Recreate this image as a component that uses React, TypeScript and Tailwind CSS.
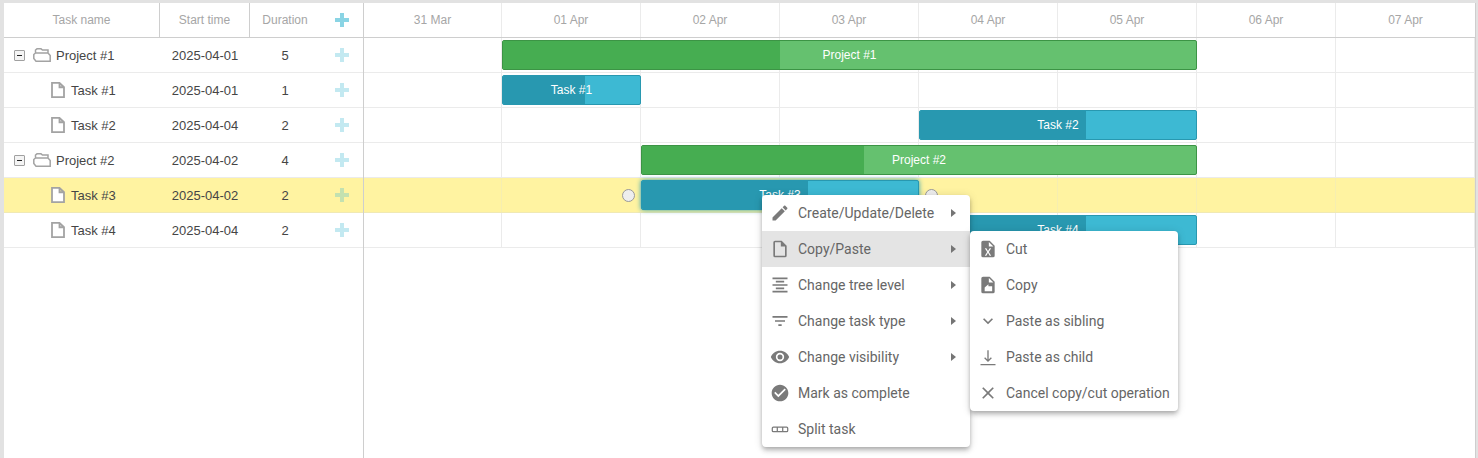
import React from "react";

const ICONS = {
  pencil: "M20.71,7.04C21.1,6.65 21.1,6 20.71,5.63L18.37,3.29C18,2.9 17.35,2.9 16.96,3.29L15.12,5.12L18.87,8.87M3,17.25V21H6.75L17.81,9.93L14.06,6.18L3,17.25Z",
  file: "M14,2H6A2,2 0 0,0 4,4V20A2,2 0 0,0 6,22H18A2,2 0 0,0 20,20V8L14,2M18,20H6V4H13V9H18V20Z",
  align: "M3,3H21V5H3V3M7,7H17V9H7V7M3,11H21V13H3V11M7,15H17V17H7V15M3,19H21V21H3V19Z",
  filter: "M6,13H18V11H6M3,6V8H21V6M10,18H14V16H10V18Z",
  eye: "M12,9A3,3 0 0,0 9,12A3,3 0 0,0 12,15A3,3 0 0,0 15,12A3,3 0 0,0 12,9M12,17A5,5 0 0,1 7,12A5,5 0 0,1 12,7A5,5 0 0,1 17,12A5,5 0 0,1 12,17M12,4.5C7,4.5 2.73,7.61 1,12C2.73,16.39 7,19.5 12,19.5C17,19.5 21.27,16.39 23,12C21.27,7.61 17,4.5 12,4.5Z",
  check: "M12 2C6.5 2 2 6.5 2 12S6.5 22 12 22 22 17.5 22 12 17.5 2 12 2M10 17L5 12L6.41 10.59L10 14.17L17.59 6.58L19 8L10 17Z",
  split: "M4,9H20A2,2 0 0,1 22,11V14A2,2 0 0,1 20,16H4A2,2 0 0,1 2,14V11A2,2 0 0,1 4,9M4,10.5A.5,.5 0 0,0 3.5,11V14A.5,.5 0 0,0 4,14.5H8V10.5H4M9.5,10.5V14.5H14.5V10.5H9.5M16,10.5V14.5H20A.5,.5 0 0,0 20.5,14V11A.5,.5 0 0,0 20,10.5H16Z",
  cut: "M14,2H6A2,2 0 0,0 4,4V20A2,2 0 0,0 6,22H18A2,2 0 0,0 20,20V8L14,2M15.8,20H14L12,16.6L10,20H8.2L11.1,15.5L8.2,11H10L12,14.4L14,11H15.8L12.9,15.5L15.8,20M13,9V3.5L18.5,9H13Z",
  copy: "M14,2H6A2,2 0 0,0 4,4V20A2,2 0 0,0 6,22H18A2,2 0 0,0 20,20V8L14,2M13,9V3.5L18.5,9H13M12.5,11V13.5H17V19.5H8V15Z",
  chevron: "M7.41,8.58L12,13.17L16.59,8.58L18,10L12,16L6,10L7.41,8.58Z",
  child: "M11.2,4H12.8V15L15.5,12.3L16.6,13.4L12,18L7.4,13.4L8.5,12.3L11.2,15V4M3,20.5H21V22H3V20.5Z",
  close: "M19,6.41L17.59,5L12,10.59L6.41,5L5,6.41L10.59,12L5,17.59L6.41,19L12,13.41L17.59,19L19,17.59L13.41,12L19,6.41Z",
};

type IconName = keyof typeof ICONS;

const MenuIcon = ({ name }: { name: IconName }) => (
  <svg viewBox="0 0 24 24" className="w-5 h-5 shrink-0 fill-[#7a7a7a]">
    <path fillRule="evenodd" d={ICONS[name]} />
  </svg>
);

const MenuItem = ({ icon, label, arrow, active }: { icon: IconName; label: string; arrow?: boolean; active?: boolean }) => (
  <div className={`flex items-center h-9 pl-2 pr-[14px] gap-2 whitespace-nowrap ${active ? "bg-[#e4e4e4]" : ""}`}>
    <MenuIcon name={icon} />
    <span className="grow">{label}</span>
    {arrow && <span className="w-0 h-0 border-y-[4px] border-y-transparent border-l-[5px] border-l-[#757575]" />}
  </div>
);

const Plus = ({ strong }: { strong?: boolean }) => (
  <svg viewBox="0 0 14 14" className={`w-3.5 h-3.5 ${strong ? "fill-[#8ad4e4]" : "fill-[#3db9d3] opacity-30"}`}>
    <path d="M5,0H9V5H14V9H9V14H5V9H0V5H5Z" />
  </svg>
);

const FolderIcon = () => (
  <svg viewBox="0 0 18 14" className="w-[18px] h-[14px] fill-none stroke-[#a3a3a3]" strokeWidth="1.5">
    <path d="M2.5,5V2L4,.8H8L9.5,2H15V5M.8,6.5L2.5,5H15L17.2,7.5V13.2H3L.8,10.5Z" />
  </svg>
);

const FileIcon = () => (
  <svg viewBox="0 0 14 16" className="w-[14px] h-[16px] fill-white stroke-[#a3a3a3]">
    <path d="M1,.9H8.5L13,5.25V15.1H1ZM8.5,.9V5.25H13" strokeWidth="1.8" />
  </svg>
);

const rows = [
  { name: "Project #1", start: "2025-04-01", dur: 5, project: true },
  { name: "Task #1", start: "2025-04-01", dur: 1 },
  { name: "Task #2", start: "2025-04-04", dur: 2 },
  { name: "Project #2", start: "2025-04-02", dur: 4, project: true },
  { name: "Task #3", start: "2025-04-02", dur: 2, selected: true },
  { name: "Task #4", start: "2025-04-04", dur: 2 },
];

const days = ["31 Mar", "01 Apr", "02 Apr", "03 Apr", "04 Apr", "05 Apr", "06 Apr", "07 Apr"];

const bars = [
  { text: "Project #1", cls: "col-start-2 col-span-5", progress: "w-[40%]", green: true },
  { text: "Task #1", cls: "col-start-2 col-span-1", progress: "w-[60%]" },
  { text: "Task #2", cls: "col-start-5 col-span-2", progress: "w-[60%]" },
  { text: "Project #2", cls: "col-start-3 col-span-4", progress: "w-[40%]", green: true },
  { text: "Task #3", cls: "col-start-3 col-span-2", progress: "w-[60%]", selected: true },
  { text: "Task #4", cls: "col-start-5 col-span-2", progress: "w-[60%]" },
];

const mainMenu: { icon: IconName; label: string; arrow?: boolean; active?: boolean }[] = [
  { icon: "pencil", label: "Create/Update/Delete", arrow: true },
  { icon: "file", label: "Copy/Paste", arrow: true, active: true },
  { icon: "align", label: "Change tree level", arrow: true },
  { icon: "filter", label: "Change task type", arrow: true },
  { icon: "eye", label: "Change visibility", arrow: true },
  { icon: "check", label: "Mark as complete" },
  { icon: "split", label: "Split task" },
];

const subMenu: { icon: IconName; label: string }[] = [
  { icon: "cut", label: "Cut" },
  { icon: "copy", label: "Copy" },
  { icon: "chevron", label: "Paste as sibling" },
  { icon: "child", label: "Paste as child" },
  { icon: "close", label: "Cancel copy/cut operation" },
];

const COLS = "grid-cols-[138px_repeat(7,139px)]";

export default function App() {
  return (
    <div className="relative h-[458px] w-[1478px] overflow-hidden bg-[#e2e2e2] pt-[3px] pl-[4px] pr-[2px] font-['Liberation_Sans',Arial,sans-serif] text-[13px] text-[#454545]">
      <div className="flex h-full bg-white border-r border-[#cecece]">
        {/* grid */}
        <div className="w-[360px] shrink-0 border-r border-[#cecece]">
          <div className="flex h-[34px] box-content border-b border-[#cecece] text-xs text-[#a6a6a6]">
            <div className="w-[156px] flex items-center justify-center border-r border-[#cecece]">Task name</div>
            <div className="w-[90px] flex items-center justify-center border-r border-[#cecece]">Start time</div>
            <div className="w-[70px] flex items-center justify-center">Duration</div>
            <div className="grow flex items-center justify-center"><Plus strong /></div>
          </div>
          {rows.map((r) => (
            <div key={r.name} className={`flex items-center h-[35px] border-b ${r.selected ? "bg-[#fff3a1] border-[#f0e9b4]" : "border-[#ebebeb]"}`}>
              <div className="w-[156px] flex items-center">
                {r.project ? (
                  <div className="flex items-center pl-[10px] gap-[8px]">
                    <span className="w-[11px] h-[11px] border border-[#a0a0a0] rounded-[1px] bg-[#f4f4f4] flex items-center justify-center">
                      <span className="w-[5px] h-px bg-[#222]" />
                    </span>
                    <FolderIcon />
                  </div>
                ) : (
                  <div className="pl-[47px] pr-[2px] flex"><FileIcon /></div>
                )}
                <span className={`pt-[2px] ${r.project ? "ml-[5px]" : "ml-1"}`}>{r.name}</span>
              </div>
              <div className="w-[90px] pt-[2px] text-center">{r.start}</div>
              <div className="w-[70px] pt-[2px] text-center">{r.dur}</div>
              <div className="grow flex justify-center"><Plus /></div>
            </div>
          ))}
        </div>

        {/* timeline */}
        <div className="grow min-w-0">
          <div className={`grid ${COLS} h-[34px] box-content border-b border-[#cecece] text-xs text-[#a6a6a6]`}>
            {days.map((d) => (
              <div key={d} className="flex items-center justify-center border-r border-[#ebebeb] last:border-r-0">{d}</div>
            ))}
          </div>
          {bars.map((b, i) => (
            <div key={b.text} className={`grid ${COLS} h-[35px] border-b ${rows[i].selected ? "bg-[#fff3a1] border-[#f0e9b4]" : "border-[#ebebeb]"}`}>
              {days.map((d, c) => (
                <div key={d} style={{ gridColumnStart: c + 1 }} className={`row-start-1 border-r last:border-r-0 ${rows[i].selected ? "border-[#f6eeb0]" : "border-[#ebebeb]"}`} />
              ))}
              <div className={`${b.cls} row-start-1 self-start z-10 mt-[2px] h-[30px] rounded-[2px] border overflow-hidden relative flex items-center justify-center text-xs text-white ${b.green ? "bg-[#65c16f] border-[#3c9445]" : "bg-[#3db9d3] border-[#2898b0]"} ${b.selected ? "shadow-[0_0_5px_#299cb4]" : ""}`}>
                <div className={`absolute inset-y-0 left-0 ${b.progress} ${b.green ? "bg-[#46ad51]" : "bg-[#2898b0]"}`} />
                <span className="relative">{b.text}</span>
              </div>
            </div>
          ))}
        </div>
      </div>

      {/* link handles */}
      <span className="absolute left-[622px] top-[189px] w-[13px] h-[13px] rounded-full border border-[#999] bg-[#eee]" />
      <span className="absolute left-[925px] top-[189px] w-[13px] h-[13px] rounded-full border border-[#999] bg-[#eee]" />

      {/* context menus */}
      <div className="absolute left-[762px] top-[195px] w-[208px] rounded-[4px] bg-white z-20 text-sm font-['Roboto',sans-serif] text-[#666] shadow-[0_2px_4px_-1px_rgba(0,0,0,0.2),0_4px_5px_0_rgba(0,0,0,0.14),0_1px_10px_0_rgba(0,0,0,0.12)]">
        {mainMenu.map((m) => (
          <MenuItem key={m.label} {...m} />
        ))}
      </div>
      <div className="absolute left-[970px] top-[231px] w-[208px] rounded-[4px] bg-white z-30 text-sm font-['Roboto',sans-serif] text-[#666] shadow-[0_2px_4px_-1px_rgba(0,0,0,0.2),0_4px_5px_0_rgba(0,0,0,0.14),0_1px_10px_0_rgba(0,0,0,0.12)]">
        {subMenu.map((m) => (
          <MenuItem key={m.label} {...m} />
        ))}
      </div>
    </div>
  );
}
